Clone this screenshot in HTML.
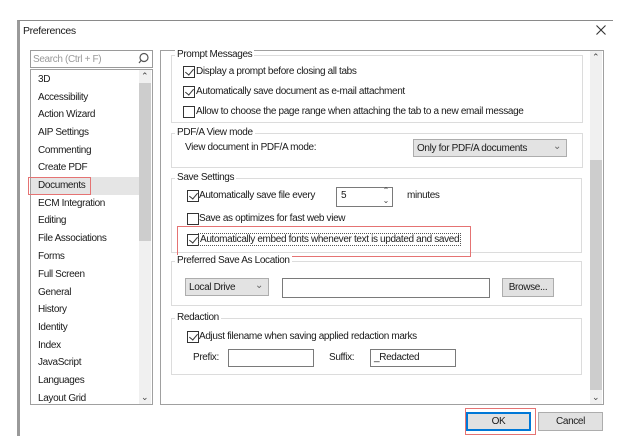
<!DOCTYPE html>
<html><head><style>
*{margin:0;padding:0;box-sizing:border-box}
body{width:624px;height:445px;background:#fff;font-family:"Liberation Sans",sans-serif;font-size:10px;letter-spacing:-0.35px;color:#1a1a1a;position:relative;overflow:hidden}
.a{position:absolute;white-space:nowrap}
.dlg{position:absolute;left:17px;top:20px;width:596px;height:416px;border-top:1px solid #8a8a8a;border-left:3px solid #9a9a9a}
.box{position:absolute;border:1px solid #c8c8c8}
.grp{position:absolute;border:1px solid #dcdcdc}
.lg{position:absolute;background:#fff;padding:0 2px;line-height:12px}
.cb{position:absolute;width:12px;height:12px;border:1px solid #333;background:#fff}
.cb.k::after{content:"";position:absolute;left:3px;top:0px;width:4px;height:7px;border:solid #333;border-width:0 1.4px 1.4px 0;transform:rotate(40deg)}
.btn{position:absolute;background:#e1e1e1;border:1px solid #adadad;text-align:center}
.it{position:absolute;left:38px}
</style></head><body>
<div class="dlg"></div>
<div class="a" style="left:23px;top:25px;font-size:10.5px">Preferences</div>
<svg class="a" style="left:596px;top:25px" width="10" height="10"><path d="M0.5 0.5L9.5 9.5M9.5 0.5L0.5 9.5" stroke="#333" stroke-width="1.1"/></svg>

<div class="box" style="left:30px;top:50px;width:123px;height:18px;border-color:#9a9a9a"></div>
<div class="a" style="left:33px;top:54px;color:#9a9a9a">Search (Ctrl + F)</div>
<svg class="a" style="left:138px;top:52px" width="12" height="12"><circle cx="6" cy="5.5" r="4" fill="none" stroke="#555" stroke-width="1.2"/><line x1="3" y1="8.5" x2="1" y2="11" stroke="#555" stroke-width="1.2"/></svg>

<div class="box" style="left:30px;top:69px;width:123px;height:336px;border-color:#a0a0a0"></div>
<div class="a" style="left:139px;top:70px;width:12px;height:334px;background:#f0f0f0"></div>
<div class="a" style="left:139px;top:83px;width:12px;height:158px;background:#cdcdcd"></div>
<div class="a" style="left:141px;top:71px;font-size:9px;color:#444">⌃</div>
<div class="a" style="left:141px;top:392px;font-size:9px;color:#444">⌄</div>
<div class="a" style="left:31px;top:177px;width:108px;height:18px;background:#e5e5e5"></div>
<div class="a" style="left:28px;top:177px;width:63px;height:18px;border:1px solid #e57373"></div>
<div class="it a" style="top:74px">3D</div>
<div class="it a" style="top:92px">Accessibility</div>
<div class="it a" style="top:109px">Action Wizard</div>
<div class="it a" style="top:127px">AIP Settings</div>
<div class="it a" style="top:145px">Commenting</div>
<div class="it a" style="top:162px">Create PDF</div>
<div class="it a" style="top:180px">Documents</div>
<div class="it a" style="top:198px">ECM Integration</div>
<div class="it a" style="top:215px">Editing</div>
<div class="it a" style="top:233px">File Associations</div>
<div class="it a" style="top:251px">Forms</div>
<div class="it a" style="top:269px">Full Screen</div>
<div class="it a" style="top:287px">General</div>
<div class="it a" style="top:304px">History</div>
<div class="it a" style="top:322px">Identity</div>
<div class="it a" style="top:340px">Index</div>
<div class="it a" style="top:357px">JavaScript</div>
<div class="it a" style="top:375px">Languages</div>
<div class="it a" style="top:393px">Layout Grid</div>

<div class="box" style="left:160px;top:50px;width:444px;height:355px;border-color:#a0a0a0"></div>
<div class="a" style="left:590px;top:51px;width:12px;height:353px;background:#f0f0f0"></div>
<div class="a" style="left:590px;top:160px;width:12px;height:230px;background:#cdcdcd"></div>
<div class="a" style="left:592px;top:52px;font-size:9px;color:#444">⌃</div>
<div class="a" style="left:592px;top:392px;font-size:9px;color:#444">⌄</div>

<div class="grp" style="left:171px;top:55px;width:412px;height:68px"></div>
<div class="lg" style="left:175px;top:49px">Prompt Messages</div>
<div class="cb k" style="left:183px;top:66px"></div><div class="a" style="left:196px;top:66px">Display a prompt before closing all tabs</div>
<div class="cb k" style="left:183px;top:86px"></div><div class="a" style="left:196px;top:86px">Automatically save document as e-mail attachment</div>
<div class="cb" style="left:183px;top:106px"></div><div class="a" style="left:196px;top:106px">Allow to choose the page range when attaching the tab to a new email message</div>

<div class="grp" style="left:171px;top:133px;width:412px;height:35px"></div>
<div class="lg" style="left:175px;top:127px">PDF/A View mode</div>
<div class="a" style="left:185px;top:142px">View document in PDF/A mode:</div>
<div class="a" style="left:413px;top:139px;width:154px;height:18px;background:#e3e3e3;border:1px solid #adadad;padding:3px 3px">Only for PDF/A documents<span style="position:absolute;right:5px;top:1px;color:#666">⌄</span></div>

<div class="grp" style="left:171px;top:178px;width:411px;height:75px"></div>
<div class="lg" style="left:175px;top:172px">Save Settings</div>
<div class="cb k" style="left:187px;top:190px"></div><div class="a" style="left:199px;top:190px">Automatically save file every</div>
<div class="a" style="left:336px;top:187px;width:57px;height:20px;border:1px solid #7a7a7a;padding:2px 4px">5<span style="position:absolute;right:3px;top:-2px;font-size:8px;color:#444;line-height:10px">⌃<br>⌄</span></div>
<div class="a" style="left:407px;top:190px">minutes</div>
<div class="cb" style="left:187px;top:213px"></div><div class="a" style="left:199px;top:213px">Save as optimizes for fast web view</div>
<div class="cb k" style="left:187px;top:234px"></div><div class="a" style="left:198px;top:233px;border:1px dotted #555;padding:0 1px">Automatically embed fonts whenever text is updated and saved</div>
<div class="a" style="left:177px;top:226px;width:294px;height:31px;border:1px solid #e57373"></div>

<div class="grp" style="left:171px;top:261px;width:411px;height:45px"></div>
<div class="lg" style="left:175px;top:255px">Preferred Save As Location</div>
<div class="a" style="left:185px;top:278px;width:84px;height:18px;background:#e3e3e3;border:1px solid #adadad;padding:3px 3px">Local Drive<span style="position:absolute;right:5px;top:1px;color:#666">⌄</span></div>
<div class="a" style="left:282px;top:278px;width:208px;height:20px;border:1px solid #7a7a7a"></div>
<div class="btn" style="left:502px;top:278px;width:52px;height:19px;padding-top:3px">Browse...</div>

<div class="grp" style="left:171px;top:318px;width:411px;height:57px"></div>
<div class="lg" style="left:175px;top:312px">Redaction</div>
<div class="cb k" style="left:187px;top:331px"></div><div class="a" style="left:199px;top:331px">Adjust filename when saving applied redaction marks</div>
<div class="a" style="left:193px;top:352px">Prefix:</div>
<div class="a" style="left:228px;top:349px;width:86px;height:18px;border:1px solid #7a7a7a"></div>
<div class="a" style="left:329px;top:352px">Suffix:</div>
<div class="a" style="left:370px;top:349px;width:86px;height:18px;border:1px solid #7a7a7a;padding:2px 3px">_Redacted</div>

<div class="btn" style="left:466px;top:412px;width:65px;height:19px;border:2px solid #0078d7;padding-top:2px">OK</div>
<div class="a" style="left:465px;top:408px;width:71px;height:27px;border:1px solid #e57373"></div>
<div class="btn" style="left:538px;top:412px;width:65px;height:19px;padding-top:3px">Cancel</div>
</body></html>
